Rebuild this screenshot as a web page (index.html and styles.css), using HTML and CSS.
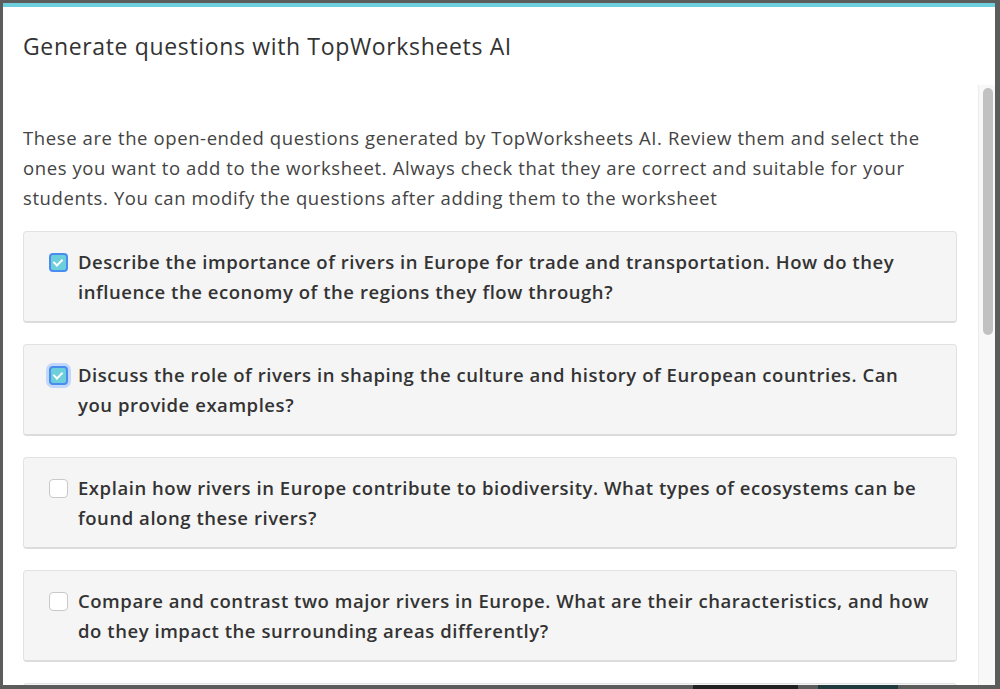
FILE: index.html
```html
<!DOCTYPE html>
<html>
<head>
	<meta charset="utf-8">
	<title>Generate questions</title>
	<link rel="stylesheet" href="styles.css">
</head>
<body>

<div class="backdrop">
	<div class="modal">
		<div class="modal-header">
			<h2>Generate questions with TopWorksheets AI</h2>
		</div>
		<div class="modal-body">
			<div class="modal-content">
				<p class="intro">These are the open-ended questions generated by TopWorksheets AI. Review them and select the ones you want to add to the worksheet. Always check that they are correct and suitable for your students. You can modify the questions after adding them to the worksheet</p>

				<label class="question">
					<span class="check checked"></span>
					<span class="q-text">Describe the importance of rivers in Europe for trade and transportation. How do they influence the economy of the regions they flow through?</span>
				</label>
				<label class="question">
					<span class="check checked focus"></span>
					<span class="q-text">Discuss the role of rivers in shaping the culture and history of European countries. Can you provide examples?</span>
				</label>
				<label class="question">
					<span class="check"></span>
					<span class="q-text">Explain how rivers in Europe contribute to biodiversity. What types of ecosystems can be found along these rivers?</span>
				</label>
				<label class="question">
					<span class="check"></span>
					<span class="q-text">Compare and contrast two major rivers in Europe. What are their characteristics, and how do they impact the surrounding areas differently?</span>
				</label>
				<label class="question">
					<span class="check"></span>
					<span class="q-text">Identify the longest river in Europe and describe its course through the continent.</span>
				</label>
			</div>
			<div class="scrollbar"><div class="thumb"></div></div>
		</div>
	</div>
	<div class="under">
		<span class="under-dark"></span>
		<span class="under-teal"></span>
	</div>
</div>

</body>
</html>
```

FILE: styles.css
```css
html, body {
	margin: 0;
	height: 100%;
	overflow: hidden;
}
body {
	font-family: "Open Sans", Arial, sans-serif;
	color: #333;
	background: #5c5c5c;
}
.backdrop {
	padding: 3px 5px 0 3px;
}
.modal {
	height: 682px;
	display: flex;
	flex-direction: column;
	background: #fff;
	border-top: 4px solid #6ccfdb;
	box-sizing: border-box;
	overflow: hidden;
}
.modal-header {
	flex: 0 0 auto;
	height: 78px;
	padding: 0 20px;
	box-sizing: border-box;
}
.modal-header h2 {
	margin: 0;
	padding-top: 23px;
	font-size: 23px;
	font-weight: 400;
	letter-spacing: 0.65px;
	line-height: 32px;
	color: #333;
}
.modal-body {
	flex: 1;
	display: flex;
	min-height: 0;
}
.modal-content {
	flex: 1;
	padding: 38px 21px 0 20px;
	overflow: hidden;
}
.intro {
	margin: 0 0 18px;
	font-size: 18.5px;
	letter-spacing: 0.6px;
	line-height: 30px;
	color: #444;
}
.question {
	display: flex;
	align-items: flex-start;
	gap: 10px;
	margin-bottom: 21px;
	padding: 15px 24px 14px 25px;
	background: #f5f5f5;
	border: 1px solid #e2e2e2;
	border-bottom: 2px solid #dcdcdc;
	border-radius: 4px;
}
.check {
	flex: 0 0 auto;
	width: 19px;
	height: 19px;
	margin-top: 6px;
	box-sizing: border-box;
	background: #fff;
	border: 1px solid #c9c9c9;
	border-radius: 4px;
	position: relative;
}
.check.checked {
	background: #6ccfdb;
	border: 2px solid #4a8df0;
}
.check.checked::after {
	content: "";
	position: absolute;
	left: 4px;
	top: 2px;
	width: 4px;
	height: 7px;
	border: solid #fff;
	border-width: 0 2px 2px 0;
	transform: rotate(45deg);
}
.check.focus {
	box-shadow: 0 0 0 3px #c3d7fb;
}
.q-text {
	font-size: 18.5px;
	font-weight: 600;
	letter-spacing: 0.55px;
	line-height: 30px;
	color: #333;
}
.scrollbar {
	flex: 0 0 17px;
	box-sizing: border-box;
	background: #f8f8f8;
	border-left: 1px solid #ececec;
	padding: 3px 2px 0 4px;
}
.thumb {
	height: 247px;
	background: #c1c1c1;
	border-radius: 5px;
}
.under {
	display: flex;
	height: 10px;
	padding-left: 690px;
	gap: 20px;
}
.under-dark {
	width: 105px;
	background: #222;
}
.under-teal {
	width: 80px;
	background: #1f3b3e;
}
```
